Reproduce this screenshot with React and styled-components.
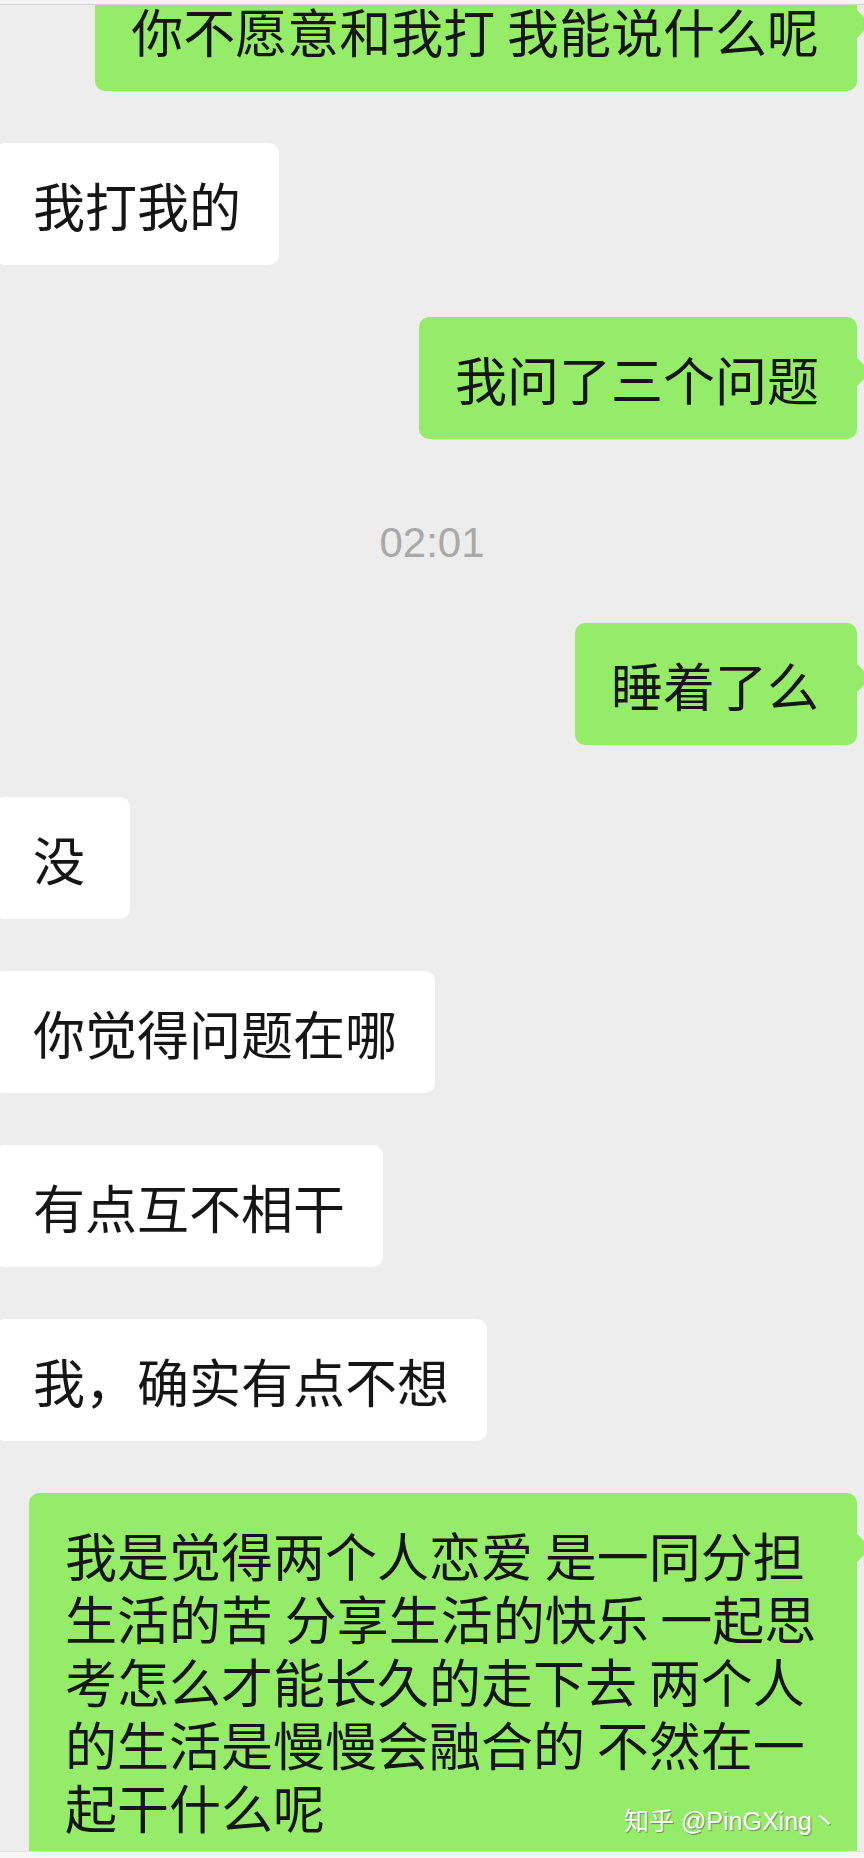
import React from 'react';
import styled, { createGlobalStyle } from 'styled-components';

const green = '#95ec69';

const GlobalStyle = createGlobalStyle`
  html, body {
    margin: 0;
    padding: 0;
    background: #ededed;
  }
  body {
    font-family: "Noto Sans CJK SC", "Noto Sans", sans-serif;
    overflow-x: hidden;
  }
`;

const Page = styled.div`
  position: relative;
  width: 864px;
  height: 1858px;
  display: flex;
  flex-direction: column;
  background: #ededed;
  overflow: hidden;
`;

const TopStrip = styled.div`
  height: 4px;
  flex: none;
  background: #f4f4f4;
  border-bottom: 1px solid #d4d4d4;
`;

const BottomStrip = styled.div`
  height: 6px;
  flex: none;
  background: #f6f6f6;
  border-top: 1px solid #e2e2e2;
`;

const Chat = styled.div`
  flex: 1;
  display: flex;
  flex-direction: column;
  gap: 52px;
  overflow: hidden;
`;

const Bubble = styled.div`
  position: relative;
  box-sizing: border-box;
  align-self: ${p => (p.$mine ? 'flex-end' : 'flex-start')};
  margin: ${p => (p.$mine ? '0 7px 0 0' : '0 0 0 -5px')};
  min-width: 135px;
  padding: 30px 38px 29px 36px;
  ${p => !p.$mine && 'padding-left: 38px;'}
  ${p => p.$first && 'margin-top: -36px;'}
  ${p => p.$width && `width: ${p.$width}px;`}
  background: ${p => (p.$mine ? green : '#ffffff')};
  border-radius: 10px;
  font-size: 52px;
  line-height: 63px;
  color: #151515;
  white-space: pre;

  ${p =>
    p.$mine &&
    `
    &::after {
      content: '';
      position: absolute;
      right: -14px;
      top: 41px;
      border-left: 14px solid ${green};
      border-top: 14px solid transparent;
      border-bottom: 14px solid transparent;
    }
  `}
`;

const Timestamp = styled.div`
  align-self: center;
  padding: 31px 0 7px;
  font-family: "Liberation Sans", Arial, sans-serif;
  font-size: 42px;
  line-height: 42px;
  color: #a9a9a9;
`;

const Watermark = styled.div`
  position: absolute;
  right: 27px;
  bottom: 22px;
  font-family: "Liberation Sans", "Noto Sans CJK SC", sans-serif;
  font-size: 25px;
  line-height: 30px;
  color: #ffffff;
  text-shadow: 1px 1px 1px rgba(60, 60, 60, 0.55);

  span {
    font-family: "Noto Sans CJK SC", sans-serif;
  }
`;

const messages = [
  { mine: true, text: '你不愿意和我打 我能说什么呢', first: true },
  { mine: false, text: '我打我的' },
  { mine: true, text: '我问了三个问题' },
  { time: '02:01' },
  { mine: true, text: '睡着了么' },
  { mine: false, text: '没' },
  { mine: false, text: '你觉得问题在哪' },
  { mine: false, text: '有点互不相干' },
  { mine: false, text: '我，确实有点不想' },
  {
    mine: true,
    width: 828,
    text:
      '我是觉得两个人恋爱 是一同分担\n生活的苦 分享生活的快乐 一起思\n考怎么才能长久的走下去 两个人\n的生活是慢慢会融合的 不然在一\n起干什么呢',
  },
];

export default function App() {
  return (
    <>
      <GlobalStyle />
      <Page>
        <TopStrip />
        <Chat>
          {messages.map((m, idx) =>
            m.time ? (
              <Timestamp key={idx}>{m.time}</Timestamp>
            ) : (
              <Bubble key={idx} $mine={m.mine} $first={m.first} $width={m.width}>
                {m.text}
              </Bubble>
            )
          )}
        </Chat>
        <BottomStrip />
        <Watermark>
          <span>知乎</span> @PinGXing<span>丶</span>
        </Watermark>
      </Page>
    </>
  );
}
